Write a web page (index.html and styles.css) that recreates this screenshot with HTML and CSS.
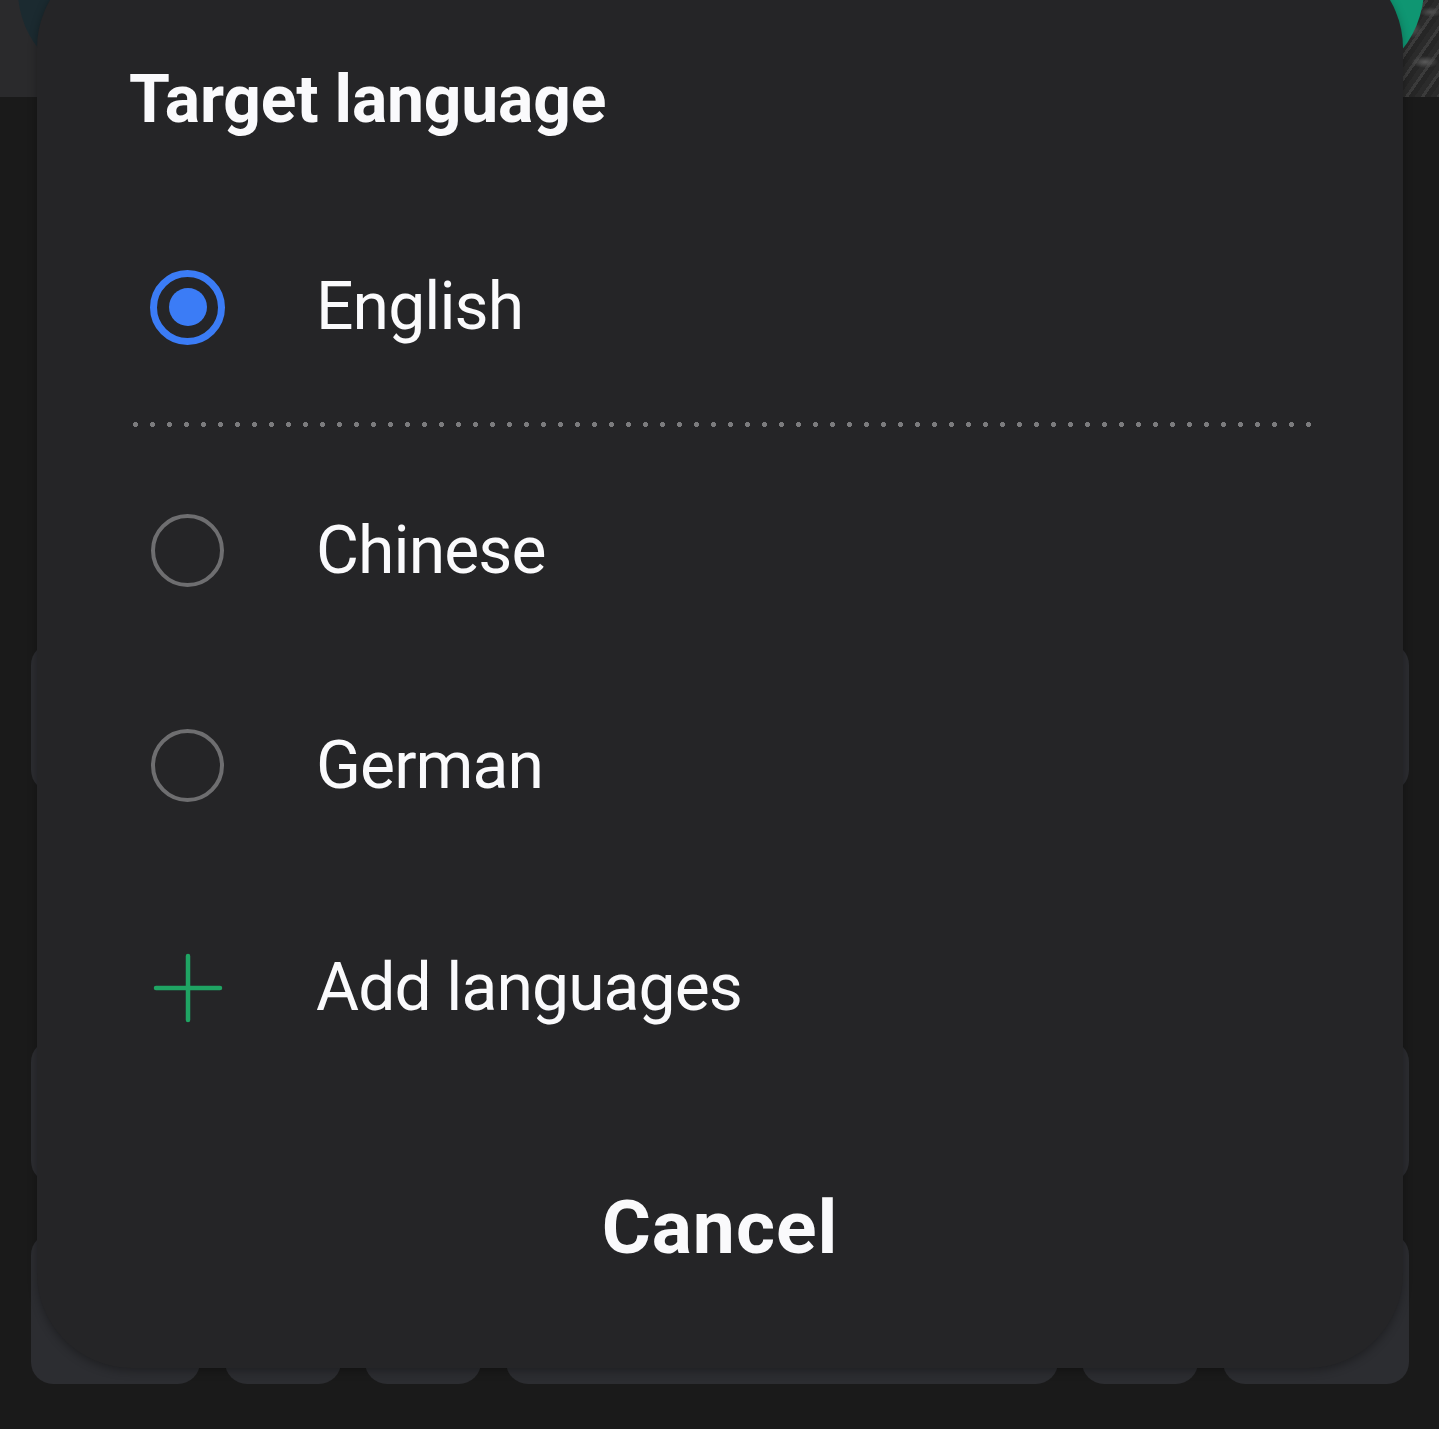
FILE: index.html
```html
<!DOCTYPE html>
<html lang="en">
<head>
<meta charset="utf-8">
<title>Target language</title>
<link rel="stylesheet" href="styles.css">
</head>
<body>
<div class="screen">
  <header class="topbar">
    <div class="avatar"></div>
    <div class="thumb"></div>
  </header>

  <div class="keyboard">
    <div class="krow r1">
      <div class="key"></div><div class="key"></div><div class="key"></div><div class="key"></div><div class="key"></div>
      <div class="key"></div><div class="key"></div><div class="key"></div><div class="key"></div><div class="key"></div>
    </div>
    <div class="krow r2">
      <div class="key"></div><div class="key"></div><div class="key"></div><div class="key"></div><div class="key"></div>
      <div class="key"></div><div class="key"></div><div class="key"></div><div class="key"></div>
    </div>
    <div class="krow r3">
      <div class="key wide"></div><div class="key"></div><div class="key"></div><div class="key"></div><div class="key"></div>
      <div class="key"></div><div class="key"></div><div class="key"></div><div class="key wide"></div>
    </div>
    <div class="krow r4">
      <div class="key k-sym"></div>
      <div class="key k-small"></div>
      <div class="key k-small"></div>
      <div class="key k-space"></div>
      <div class="key k-small"></div>
      <div class="key k-enter"></div>
    </div>
  </div>

  <div class="fab"></div>

  <div class="dialog" role="dialog" aria-label="Target language">
    <h1 class="title">Target language</h1>

    <div class="option first">
      <span class="ico"><span class="radio on"></span></span>
      <span class="label">English</span>
    </div>
    <div class="divider"></div>
    <div class="option">
      <span class="ico"><span class="radio"></span></span>
      <span class="label">Chinese</span>
    </div>
    <div class="option">
      <span class="ico"><span class="radio"></span></span>
      <span class="label">German</span>
    </div>
    <div class="option add">
      <span class="ico">
        <svg class="plus" width="70" height="70" viewBox="0 0 70 70" aria-hidden="true">
          <path d="M35 3 V67 M3 35 H67" stroke="#1fa463" stroke-width="4.5" stroke-linecap="round" fill="none"/>
        </svg>
      </span>
      <span class="label">Add languages</span>
    </div>

    <div class="actions">
      <button class="cancel" type="button">Cancel</button>
    </div>
  </div>
</div>
</body>
</html>
```

FILE: styles.css
```css
* { box-sizing: border-box; }

html, body {
  margin: 0;
  padding: 0;
  background: #1a1a1a;
}

body {
  font-family: Roboto, "Noto Sans", "Liberation Sans", sans-serif;
  color: #fafafc;
  width: 1439px;
  height: 1429px;
  overflow: hidden;
}

.screen {
  position: relative;
  width: 1439px;
  height: 1429px;
  overflow: hidden;
}

/* ---------- background app bar ---------- */
.topbar {
  height: 97px;
  background: #2a2a2c;
  display: flex;
  overflow: hidden;
}

.avatar {
  width: 185px;
  height: 185px;
  margin: -102px 0 0 18px;
  border-radius: 50%;
  background: #1b2a30;
  flex: none;
}

.thumb {
  margin-left: auto;
  width: 36px;
  height: 97px;
  flex: none;
  background:
    radial-gradient(ellipse 14px 6px at 22px 62px, #5a5a5a 0%, rgba(90,90,90,0) 100%),
    radial-gradient(ellipse 10px 8px at 10px 30px, #4d4d4d 0%, rgba(77,77,77,0) 100%),
    radial-gradient(ellipse 12px 5px at 28px 12px, #505050 0%, rgba(80,80,80,0) 100%),
    repeating-linear-gradient(125deg, #2b2b2b 0 5px, #3b3b3b 5px 8px, #262626 8px 13px),
    #2e2e2e;
}

.fab {
  position: absolute;
  left: 1228px;
  top: -110px;
  width: 196px;
  height: 196px;
  border-radius: 50%;
  background: #0f9672;
}

/* ---------- keyboard behind ---------- */
.keyboard {
  margin-top: 546px;
  padding: 0 30px 0 31px;
  display: flex;
  flex-direction: column;
  gap: 50px;
}

.krow {
  display: flex;
  gap: 24px;
}

.krow.r1 { height: 149px; }
.krow.r2 { height: 148px; padding: 0 70px; }
.krow.r3 { height: 143px; }
.krow.r4 { height: 151px; gap: 24.5px; }

.key {
  flex: 1 1 0;
  background: #2c2d31;
  border-radius: 22px;
}

.key.wide { flex: 1.6 1 0; }

.key.k-sym   { flex: none; width: 169px; }
.key.k-small { flex: none; width: 116px; }
.key.k-space { flex: none; width: 552px; }
.key.k-enter { flex: 1 1 auto; }

/* ---------- dialog ---------- */
.dialog {
  position: absolute;
  left: 37px;
  top: -47px;
  width: 1366px;
  height: 1415px;
  border-radius: 95px;
  background: #252527;
  box-shadow: 0 3px 10px rgba(0, 0, 0, 0.3);
  padding-top: 107px;
  display: flex;
  flex-direction: column;
}

.title {
  margin: 0 0 0 92px;
  font-size: 66px;
  line-height: 80px;
  font-weight: 700;
  letter-spacing: -0.2px;
  color: #fafafc;
}

.option {
  height: 215px;
  display: flex;
  align-items: center;
  padding-left: 113px;
}

.option.first { margin-top: 60px; height: 214px; }
.option.add { margin-top: 7px; }

.ico {
  width: 75px;
  height: 75px;
  flex: none;
  display: flex;
  align-items: center;
  justify-content: center;
}

.radio {
  width: 73px;
  height: 73px;
  border-radius: 50%;
  border: 4px solid #6e6e70;
  display: flex;
  align-items: center;
  justify-content: center;
}

.radio.on {
  width: 75px;
  height: 75px;
  border: 7px solid #3b7cf6;
}

.radio.on::after {
  content: "";
  width: 38px;
  height: 38px;
  border-radius: 50%;
  background: #3b7cf6;
}

.plus { display: block; }

.label {
  margin-left: 91px;
  font-size: 66px;
  line-height: 80px;
  font-weight: 400;
  letter-spacing: -0.9px;
  color: #fafafc;
}

.divider {
  margin: 8px 0 0 96px;
  width: 1178px;
  height: 5px;
  background: radial-gradient(circle at 2.5px 2.5px, #7b7b7d 2.3px, rgba(123,123,125,0) 2.8px) 0 0 / 17px 5px repeat-x;
  margin-bottom: 16px;
}

.actions {
  margin-top: 57px;
  display: flex;
  justify-content: center;
}

.cancel {
  height: 150px;
  padding: 0 40px;
  border: 0;
  background: transparent;
  color: #fafafc;
  font-family: Roboto, "Noto Sans", "Liberation Sans", sans-serif;
  font-size: 75px;
  font-weight: 700;
  letter-spacing: 1px;
  cursor: pointer;
}
```
